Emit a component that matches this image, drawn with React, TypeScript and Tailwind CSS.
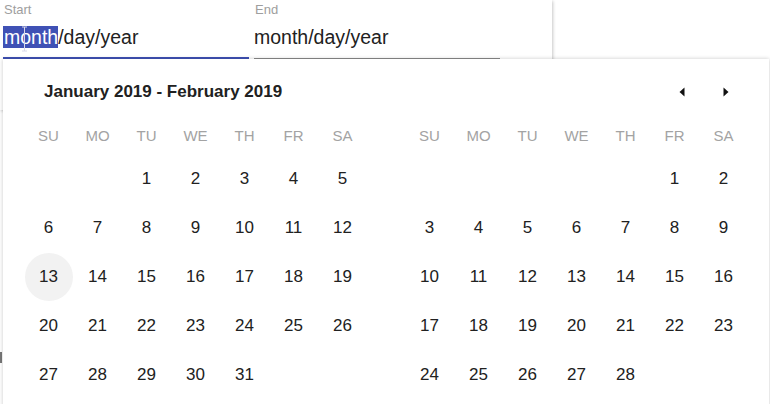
const weekdays = ["SU", "MO", "TU", "WE", "TH", "FR", "SA"];

type Month = { offset: number; days: number };

const months: Month[] = [
  { offset: 2, days: 31 }, // January 2019 starts on a Tuesday
  { offset: 5, days: 28 }, // February 2019 starts on a Friday
];

function Field({ label, focused }: { label: string; focused?: boolean }) {
  return (
    <div
      className={
        "flex h-[59px] w-[246px] flex-col " +
        (focused ? "border-b-2 border-[#3f51b5]" : "border-b border-[#8a8a8a]")
      }
    >
      <span className="mt-[3px] pl-[1px] text-[13px] leading-[14px] text-[#9e9e9e]">{label}</span>
      <div className="relative mt-[9px] text-[19.5px] leading-[22px] text-[#212121]">
        {focused ? (
          <>
            <span className="bg-[#3f51b5] pl-[1px] text-white">month</span>/day/year
            {/* mouse pointer over the selection */}
            <svg className="absolute left-[18px] top-[0px]" width="7" height="26" viewBox="0 0 7 26">
              <path d="M1 1h2.5M3.5 1h2.5M3.5 1v24M1 25h2.5M3.5 25h2.5" stroke="#d8d8e8" strokeWidth="1" fill="none" />
            </svg>
          </>
        ) : (
          <span>month/day/year</span>
        )}
      </div>
    </div>
  );
}

function MonthGrid({ month }: { month: Month }) {
  const cells: (number | null)[] = [];
  for (let i = 0; i < month.offset; i++) cells.push(null);
  for (let d = 1; d <= month.days; d++) cells.push(d);

  return (
    <div className="w-[343px]">
      <div className="grid h-[18px] grid-cols-7">
        {weekdays.map((w) => (
          <div key={w} className="flex items-center justify-center text-[15px] text-[#a3a3a3]">
            {w}
          </div>
        ))}
      </div>
      <div className="mt-[11px] grid grid-cols-7">
        {cells.map((d, i) => (
          <div key={i} className="flex h-[49px] items-center justify-center">
            {d !== null && (
              <div
                className={
                  "flex h-[48px] w-[48px] items-center justify-center rounded-full text-[17px] text-[#212121] " +
                  (d === 13 && month.days === 31 ? "bg-[#f2f2f2]" : "")
                }
              >
                {d}
              </div>
            )}
          </div>
        ))}
      </div>
    </div>
  );
}

export default function App() {
  return (
    <div
      className="relative h-[404px] w-[770px] overflow-hidden bg-white"
      style={{ fontFamily: '"Liberation Sans", Arial, sans-serif' }}
    >
      {/* card holding the two inputs */}
      <div className="h-[110px] w-[552px] bg-white shadow-[1px_1px_3px_rgba(0,0,0,0.22)]">
        <div className="flex gap-[5px] pl-[3px]">
          <Field label="Start" focused />
          <Field label="End" />
        </div>
      </div>
      <div className="absolute left-0 top-[352px] h-[11px] w-[2px] bg-[#777]" />

      {/* date range popover */}
      <div className="absolute left-[3px] top-[59px] h-[360px] w-[766px] bg-white px-[21px] shadow-[0_0_4px_rgba(0,0,0,0.22)]">
        <div className="flex h-[66px] items-center justify-between">
          <span className="pl-[20px] text-[17px] font-bold text-[#212121]">
            January 2019 - February 2019
          </span>
          <div className="flex">
            <button className="flex h-[40px] w-[44px] items-center justify-center">
              <svg width="24" height="24" viewBox="0 0 24 24">
                <path d="M14.5 7.5l-5 4.5 5 4.5V7.5z" fill="#111" />
              </svg>
            </button>
            <button className="flex h-[40px] w-[44px] items-center justify-center">
              <svg width="24" height="24" viewBox="0 0 24 24">
                <path d="M9.5 16.5l5-4.5-5-4.5v9z" fill="#111" />
              </svg>
            </button>
          </div>
        </div>
        <div className="flex gap-[38px]">
          {months.map((m, i) => (
            <MonthGrid key={i} month={m} />
          ))}
        </div>
      </div>
    </div>
  );
}
